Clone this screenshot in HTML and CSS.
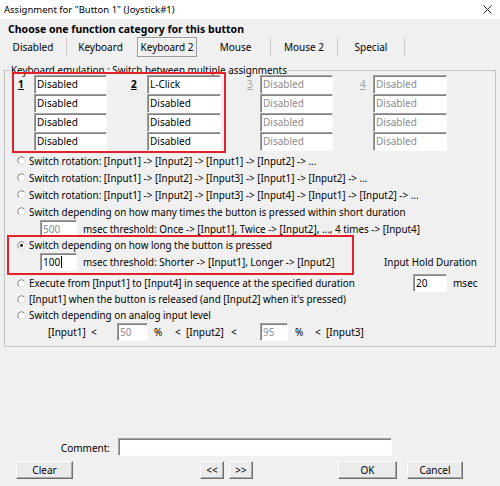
FILE: index.html
```html
<!DOCTYPE html>
<html>
<head>
<meta charset="utf-8">
<title>Assignment</title>
<link rel="stylesheet" href="styles.css">
</head>
<body>
<div class="titlebar">
  <span class="title">Assignment for "Button 1" (Joystick#1)</span>
  <svg class="close" viewBox="0 0 9 9"><path d="M0.5 0.5 L8.5 8.5 M8.5 0.5 L0.5 8.5" stroke="#222" stroke-width="1" fill="none"/></svg>
</div>
<div class="heading">Choose one function category for this button</div>
<div class="tabs">
  <div class="tab w67 sep">Disabled</div>
  <div class="tab w67">Keyboard</div>
  <div class="tab w67 tab-active"><span class="tab-box">Keyboard 2</span></div>
  <div class="tab w70 sep">Mouse</div>
  <div class="tab w67 sep">Mouse 2</div>
  <div class="tab w67 sep">Special</div>
</div>
<fieldset class="group">
  <legend>Keyboard emulation : Switch between multiple assignments</legend>
  <div class="gbody">
    <div class="assign">
      <div class="col">
        <div class="num n12">1</div>
        <div class="stack w73">
          <div class="tb">Disabled</div><div class="tb">Disabled</div><div class="tb">Disabled</div><div class="tb">Disabled</div>
        </div>
      </div>
      <div class="col gap20">
        <div class="num n12">2</div>
        <div class="stack w74">
          <div class="tb">L-Click</div><div class="tb">Disabled</div><div class="tb">Disabled</div><div class="tb">Disabled</div>
        </div>
      </div>
      <div class="col gap19">
        <div class="num n34">3</div>
        <div class="stack w73">
          <div class="tb dis">Disabled</div><div class="tb dis">Disabled</div><div class="tb dis">Disabled</div><div class="tb dis">Disabled</div>
        </div>
      </div>
      <div class="col gap20">
        <div class="num n34">4</div>
        <div class="stack w74">
          <div class="tb dis">Disabled</div><div class="tb dis">Disabled</div><div class="tb dis">Disabled</div><div class="tb dis">Disabled</div>
        </div>
      </div>
    </div>

    <div class="opt first">
      <svg class="radio" viewBox="0 0 12 12"><circle cx="6" cy="6" r="5" fill="#fff" stroke="#d4d4d4" stroke-width="1"/><path d="M2.46 9.54 A5 5 0 0 1 9.54 2.46" fill="none" stroke="#7d7d7d" stroke-width="1.2"/></svg>
      <span>Switch rotation: [Input1] -&gt; [Input2] -&gt; [Input1] -&gt; [Input2] -&gt; ...</span>
    </div>
    <div class="opt">
      <svg class="radio" viewBox="0 0 12 12"><circle cx="6" cy="6" r="5" fill="#fff" stroke="#d4d4d4" stroke-width="1"/><path d="M2.46 9.54 A5 5 0 0 1 9.54 2.46" fill="none" stroke="#7d7d7d" stroke-width="1.2"/></svg>
      <span>Switch rotation: [Input1] -&gt; [Input2] -&gt; [Input3] -&gt; [Input1] -&gt; [Input2] -&gt; ...</span>
    </div>
    <div class="opt">
      <svg class="radio" viewBox="0 0 12 12"><circle cx="6" cy="6" r="5" fill="#fff" stroke="#d4d4d4" stroke-width="1"/><path d="M2.46 9.54 A5 5 0 0 1 9.54 2.46" fill="none" stroke="#7d7d7d" stroke-width="1.2"/></svg>
      <span>Switch rotation: [Input1] -&gt; [Input2] -&gt; [Input3] -&gt; [Input4] -&gt; [Input1] -&gt; [Input2] -&gt; ...</span>
    </div>
    <div class="opt">
      <svg class="radio" viewBox="0 0 12 12"><circle cx="6" cy="6" r="5" fill="#fff" stroke="#d4d4d4" stroke-width="1"/><path d="M2.46 9.54 A5 5 0 0 1 9.54 2.46" fill="none" stroke="#7d7d7d" stroke-width="1.2"/></svg>
      <span>Switch depending on how many times the button is pressed within short duration</span>
    </div>
    <div class="sub h17">
      <div class="tb tb-sm w37 dis">500</div>
      <span class="sub-text">msec threshold: Once -&gt; [Input1], Twice -&gt; [Input2], ..., 4 times -&gt; [Input4]</span>
    </div>
    <div class="opt h16">
      <svg class="radio" viewBox="0 0 12 12"><circle cx="6" cy="6" r="5" fill="#fff" stroke="#d4d4d4" stroke-width="1"/><path d="M2.46 9.54 A5 5 0 0 1 9.54 2.46" fill="none" stroke="#7d7d7d" stroke-width="1.2"/><circle cx="6" cy="6" r="1.9" fill="#000"/></svg>
      <span>Switch depending on how long the button is pressed</span>
    </div>
    <div class="sub h18">
      <div class="tb tb-sm w37">100<span class="caret"></span></div>
      <span class="sub-text">msec threshold: Shorter -&gt; [Input1], Longer -&gt; [Input2]</span>
      <span class="hold-label">Input Hold Duration</span>
    </div>
    <div class="opt h18 mt3">
      <svg class="radio" viewBox="0 0 12 12"><circle cx="6" cy="6" r="5" fill="#fff" stroke="#d4d4d4" stroke-width="1"/><path d="M2.46 9.54 A5 5 0 0 1 9.54 2.46" fill="none" stroke="#7d7d7d" stroke-width="1.2"/></svg>
      <span>Execute from [Input1] to [Input4] in sequence at the specified duration</span>
      <span class="hold-field">
        <span class="tb tb-sm w34">20</span>
        <span class="unit">msec</span>
      </span>
    </div>
    <div class="opt h16 mtm1">
      <svg class="radio" viewBox="0 0 12 12"><circle cx="6" cy="6" r="5" fill="#fff" stroke="#d4d4d4" stroke-width="1"/><path d="M2.46 9.54 A5 5 0 0 1 9.54 2.46" fill="none" stroke="#7d7d7d" stroke-width="1.2"/></svg>
      <span>[Input1] when the button is released (and [Input2] when it's pressed)</span>
    </div>
    <div class="opt h16">
      <svg class="radio" viewBox="0 0 12 12"><circle cx="6" cy="6" r="5" fill="#fff" stroke="#d4d4d4" stroke-width="1"/><path d="M2.46 9.54 A5 5 0 0 1 9.54 2.46" fill="none" stroke="#7d7d7d" stroke-width="1.2"/></svg>
      <span>Switch depending on analog input level</span>
    </div>
    <div class="analog">
      <span class="cell w43">[Input1]</span>
      <span class="cell w26">&lt;</span>
      <span class="tb tb-sm w31 dis">50</span>
      <span class="cell w21 ml6">%</span>
      <span class="cell w11">&lt;</span>
      <span class="cell w45">[Input2]</span>
      <span class="cell w29">&lt;</span>
      <span class="tb tb-sm w28 dis">95</span>
      <span class="cell w20 ml7">%</span>
      <span class="cell w11">&lt;</span>
      <span class="cell">[Input3]</span>
    </div>

    <div class="mark mark1"></div>
    <div class="mark mark2"></div>
  </div>
</fieldset>
<div class="comment-row">
  <span class="comment-label">Comment:</span>
  <div class="tb comment-box"></div>
</div>
<div class="btn-row">
  <div class="btn btn-clear">Clear</div>
  <div class="btn btn-prev">&lt;&lt;</div>
  <div class="btn btn-next">&gt;&gt;</div>
  <div class="btn btn-ok">OK</div>
  <div class="btn btn-cancel">Cancel</div>
</div>
</body>
</html>
```

FILE: styles.css
```css
* { box-sizing: border-box; }
html, body { margin: 0; padding: 0; }
body {
  width: 500px;
  height: 486px;
  background: #f0f0f0;
  font-family: "Noto Sans", "Open Sans", sans-serif;
  font-size: 10px;
  color: #000;
  overflow: hidden;
}

/* title bar */
.titlebar {
  height: 19px;
  background: #fff;
  display: flex;
  align-items: center;
  justify-content: space-between;
  padding: 0 8px 0 4px;
}
.title { font-size: 9.5px; white-space: nowrap; }
.close { width: 9px; height: 9px; display: block; }

.heading {
  margin: 3px 0 0 8px;
  height: 15px;
  line-height: 15px;
  font-weight: bold;
  font-size: 10.5px;
  white-space: nowrap;
}

/* tabs */
.tabs { display: flex; align-items: center; height: 20px; }
.tab { flex: none; height: 18px; line-height: 18px; text-align: center; white-space: nowrap; }
.sep { border-right: 1px solid #cacaca; }
.w67 { width: 67px; }
.w70 { width: 70px; }
.tab-active { height: 20px; padding: 0 4px 0 3px; }
.tab-box {
  display: block;
  height: 20px;
  line-height: 18px;
  border: 1px solid #9a9a9a;
  box-shadow: inset 1px 1px 0 #fff;
}

/* group box */
.group {
  margin: 7px 4px 0;
  padding: 0 0 5px 0;
  border: 1px solid #c3c3c3;
  min-width: 0;
}
.group legend {
  margin-left: 5px;
  padding: 0 1px;
  line-height: 12px;
  font-size: 9.85px;
  white-space: nowrap;
}
.gbody { position: relative; }

/* assignment inputs */
.assign { display: flex; margin-top: -1px; padding-left: 9px; height: 76px; }
.col { display: flex; }
.gap20 { margin-left: 20px; }
.gap19 { margin-left: 19px; }
.num { width: 20px; line-height: 19px; text-decoration: underline; }
.n12 { padding-left: 4px; font-weight: bold; }
.n34 { padding-left: 7px; color: #a3a3a3; }
.stack { display: flex; flex-direction: column; }
.w73 { width: 73px; }
.w74 { width: 74px; }

.tb {
  display: block;
  height: 19px;
  line-height: 17px;
  padding-left: 2px;
  background: #fff;
  border: 1px solid;
  border-color: #a0a0a0 #fdfdfd #fdfdfd #a0a0a0;
  box-shadow: inset 1px 1px 0 #808080;
  white-space: nowrap;
  overflow: hidden;
  flex: none;
}
.tb-sm { height: 18px; line-height: 16px; }
.dis { color: #8d8d8d; }
.w37 { width: 37px; }
.w34 { width: 34px; }
.w31 { width: 31px; }
.w28 { width: 28px; }
.caret {
  display: inline-block;
  width: 1px;
  height: 12px;
  background: #000;
  vertical-align: -2px;
  margin-left: 1px;
}

/* option rows */
.opt {
  display: flex;
  align-items: center;
  height: 17px;
  padding-left: 12px;
  white-space: nowrap;
  font-size: 9.85px;
}
.first { margin-top: 1px; }
.h16 { height: 16px; }
.h17 { height: 17px; }
.h18 { height: 18px; }
.mt3 { margin-top: 3px; }
.mtm1 { margin-top: -1px; }
.radio { width: 9px; height: 9px; margin-right: 3px; flex: none; display: block; }

.sub {
  display: flex;
  align-items: flex-start;
  padding-left: 35px;
  white-space: nowrap;
}
.sub-text { margin-left: 6px; line-height: 18px; font-size: 9.85px; }
.hold-label { margin-left: auto; width: 111px; line-height: 18px; font-size: 9.85px; }
.hold-field { margin-left: auto; width: 82px; display: flex; align-items: center; font-size: 10px; }
.unit { margin-left: 6px; }

.analog {
  display: flex;
  align-items: center;
  height: 18px;
  padding-left: 43px;
  white-space: nowrap;
}
.cell { flex: none; }
.w43 { width: 43px; }
.w26 { width: 26px; }
.w21 { width: 21px; }
.w11 { width: 11px; }
.w45 { width: 45px; }
.w29 { width: 29px; }
.w20 { width: 20px; }
.ml6 { margin-left: 6px; }
.ml7 { margin-left: 7px; }

/* red annotation boxes */
.mark { position: absolute; border: 2px solid #e3212b; pointer-events: none; }
.mark1 { left: 7px; top: -3px; width: 214px; height: 81px; }
.mark2 { left: 2px; top: 160px; width: 347px; height: 40px; }

/* footer */
.comment-row { display: flex; align-items: center; height: 18px; margin-top: 91px; }
.comment-label { width: 110px; text-align: right; padding-top: 1px; }
.comment-box { margin-left: 8px; width: 274px; height: 18px; }

.btn-row { display: flex; height: 18px; margin-top: 5px; }
.btn {
  flex: none;
  height: 18px;
  line-height: 16px;
  text-align: center;
  background: #ebebeb;
  border: 1px solid;
  border-color: #fff #6f6f6f #6f6f6f #fff;
  box-shadow: inset -1px -1px 0 #a8a8a8;
}
.btn-clear { margin-left: 16px; width: 57px; }
.btn-prev { margin-left: 127px; width: 24px; }
.btn-next { margin-left: 5px; width: 24px; }
.btn-ok { margin-left: 85px; width: 59px; }
.btn-cancel { margin-left: 10px; width: 56px; }
```
